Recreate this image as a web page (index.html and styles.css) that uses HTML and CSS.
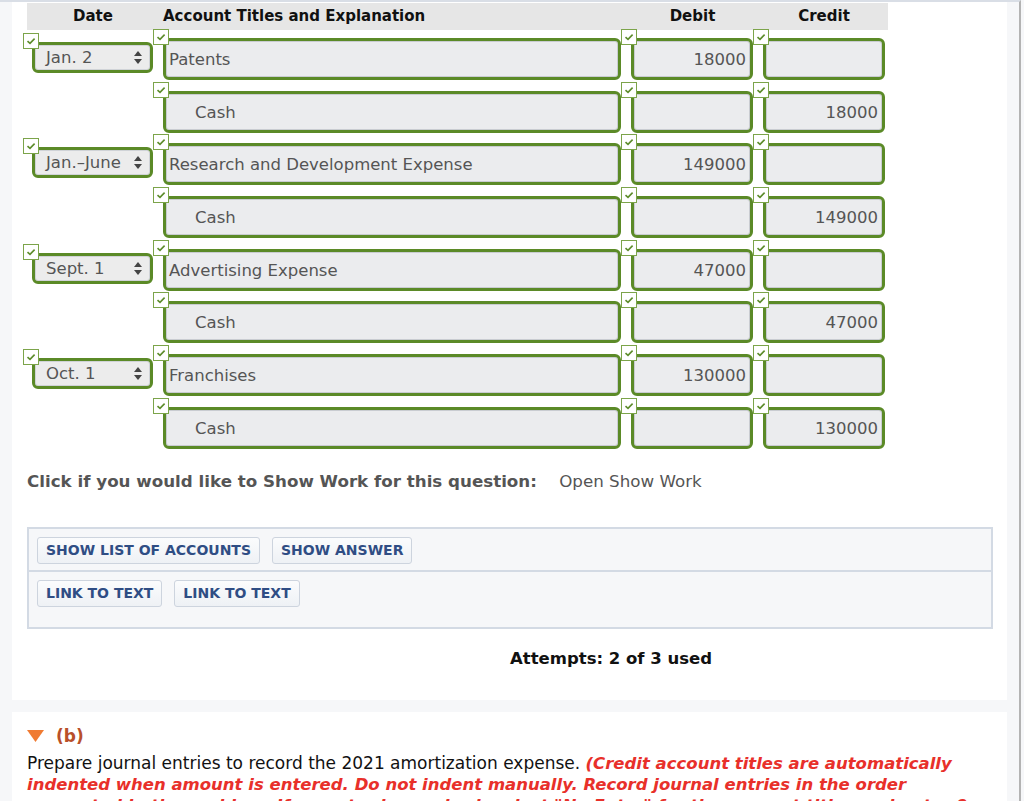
FILE: index.html
```html
<!DOCTYPE html>
<html lang="en">
<head>
    <meta charset="UTF-8">
    <title>Journal Entries</title>
    <link rel="stylesheet" href="styles.css">
</head>
<body>
    <div class="page">
        <div class="panel">
            <div class="journal-head">
                <div class="col-date">Date</div>
                <div class="col-account">Account Titles and Explanation</div>
                <div class="col-debit">Debit</div>
                <div class="col-credit">Credit</div>
            </div>

            <div class="journal" id="journal"></div>

            <p class="show-work">
                <b>Click if you would like to Show Work for this question:</b>
                <a href="#" class="show-work-link">Open Show Work</a>
            </p>

            <div class="tools">
                <div class="tools-row">
                    <button class="tool-btn">Show List of Accounts</button>
                    <button class="tool-btn">Show Answer</button>
                </div>
                <div class="tools-row tools-row-last">
                    <button class="tool-btn">Link to Text</button>
                    <button class="tool-btn">Link to Text</button>
                </div>
            </div>

            <div class="attempts">Attempts: 2 of 3 used</div>
        </div>

        <div class="panel panel-next">
            <div class="part-title">
                <svg class="caret" width="17" height="12" viewBox="0 0 17 12"><polygon points="0,0 17,0 8.5,12" fill="#f07b32"/></svg>
                <span>(b)</span>
            </div>
            <p class="part-text">
                Prepare journal entries to record the 2021 amortization expense.
                <em>(Credit account titles are automatically indented when amount is entered. Do not indent manually. Record journal entries in the order presented in the problem. If no entry is required, select "No Entry" for the account titles and enter 0 for the amounts.)</em>
            </p>
        </div>
    </div>

    <script>
        const entries = [
            { date: 'Jan. 2', account: 'Patents', debit: '18000', credit: '' },
            { date: '', account: 'Cash', debit: '', credit: '18000' },
            { date: 'Jan.\u2013June', account: 'Research and Development Expense', debit: '149000', credit: '' },
            { date: '', account: 'Cash', debit: '', credit: '149000' },
            { date: 'Sept. 1', account: 'Advertising Expense', debit: '47000', credit: '' },
            { date: '', account: 'Cash', debit: '', credit: '47000' },
            { date: 'Oct. 1', account: 'Franchises', debit: '130000', credit: '' },
            { date: '', account: 'Cash', debit: '', credit: '130000' }
        ];

        const tick = '<span class="check"><svg width="10" height="8" viewBox="0 0 10 8"><polyline points="1.5,4.2 4,6.4 8.6,1.6" fill="none" stroke="#5d8c2b" stroke-width="1.6"/></svg></span>';
        const spinner = '<svg class="spin" width="8" height="13" viewBox="0 0 8 13"><polygon points="4,0 8,5 0,5" fill="#444"/><polygon points="0,8 8,8 4,13" fill="#444"/></svg>';

        const journal = document.getElementById('journal');

        entries.forEach(function(entry) {
            const row = document.createElement('div');
            row.className = 'entry';

            let dateCell = '<div class="cell cell-date">';
            if (entry.date) {
                dateCell += tick + '<div class="date-select"><span>' + entry.date + '</span>' + spinner + '</div>';
            }
            dateCell += '</div>';

            // credit lines are shown indented
            const indent = entry.credit ? ' field-indent' : '';

            row.innerHTML = dateCell +
                '<div class="cell cell-account">' + tick + '<div class="field' + indent + '">' + entry.account + '</div></div>' +
                '<div class="cell cell-amount">' + tick + '<div class="field field-num">' + entry.debit + '</div></div>' +
                '<div class="cell cell-amount">' + tick + '<div class="field field-num">' + entry.credit + '</div></div>';

            journal.appendChild(row);
        });
    </script>
</body>
</html>
```

FILE: styles.css
```css
body {
    margin: 0;
    padding: 0;
    background: #f6f7f9;
    font-family: "DejaVu Sans", Verdana, sans-serif;
    color: #333;
    overflow: hidden;
}
.page {
    width: 1007px;
    border-top: 2px solid #d9dee6;
    border-right: 2px solid #b3b3b3;
    padding: 0 0 0 12px;
    box-sizing: content-box;
}
.panel {
    background: #fff;
    width: 965px;
    padding: 1px 15px 0 15px;
    height: 697px;
}
.panel-next {
    margin-top: 12px;
    height: 200px;
    padding-top: 12px;
}
.journal-head {
    display: grid;
    grid-template-columns: 131px 468px 132px 132px;
    width: 861px;
    height: 27px;
    background: #e6e6e6;
    font-weight: bold;
    font-size: 15px;
    color: #111;
    line-height: 27px;
    margin-bottom: -1px;
}
.journal-head .col-date {
    text-align: center;
    padding-left: 1px;
}
.journal-head .col-account {
    padding-left: 136px;
    margin-left: -131px;
    width: 460px;
}
.journal-head .col-debit {
    text-align: center;
    padding-left: 1px;
}
.journal-head .col-credit {
    text-align: center;
    padding-left: 0;
}
.journal {
    margin-left: -5px;
}
.entry {
    display: grid;
    grid-template-columns: 131px 468px 132px 132px;
    height: 52.7px;
}
.cell {
    position: relative;
    padding: 9px 0 0 10px;
}
.check {
    position: absolute;
    left: 0;
    top: 0;
    width: 14px;
    height: 14px;
    border: 1px solid #7ca44a;
    background: #fff;
    display: flex;
    align-items: center;
    justify-content: center;
    z-index: 2;
}
.cell-date .check {
    left: 1px;
    top: 4px;
}
.field {
    height: 36px;
    border: 3px solid #5b8a27;
    border-radius: 6px;
    background: #ebecee;
    box-shadow: inset 0 0 0 1px #c9ccd1;
    font-size: 16.5px;
    color: #555;
    line-height: 37px;
    padding: 0 4px 0 3px;
}
.field-indent {
    padding-left: 29px;
}
.field-num {
    text-align: right;
}
.date-select {
    height: 25px;
    margin-top: 4px;
    border: 3px solid #5b8a27;
    border-radius: 6px;
    background: #ececec;
    box-shadow: inset 0 0 0 1px #d0d3d7;
    font-size: 16.5px;
    color: #555;
    line-height: 25px;
    display: flex;
    justify-content: space-between;
    align-items: center;
    padding: 0 8px 0 11px;
}
.spin {
    display: block;
}
.show-work {
    margin: 20px 0 0 0;
    font-size: 16.7px;
    color: #555;
}
.show-work b {
    margin-right: 17px;
}
.show-work-link {
    color: #555;
    text-decoration: none;
}
.tools {
    margin-top: 36px;
    width: 962px;
    border: 2px solid #d3dae4;
    background: #f6f7f9;
}
.tools-row {
    display: flex;
    gap: 12px;
    padding: 8px 8px 6px 8px;
    border-bottom: 2px solid #d3dae4;
}
.tools-row-last {
    border-bottom: none;
    padding-top: 8px;
    height: 41px;
}
.tool-btn {
    height: 27px;
    border: 1px solid #cdd4de;
    border-radius: 3px;
    background: linear-gradient(#fbfcfd, #eef1f5);
    font-family: "DejaVu Sans", Verdana, sans-serif;
    font-weight: bold;
    font-size: 14px;
    color: #2f4d84;
    text-transform: uppercase;
    padding: 0 8px;
}
.attempts {
    margin-top: 20px;
    margin-left: 483px;
    font-weight: bold;
    font-size: 16.5px;
    color: #111;
}
.part-title {
    display: flex;
    align-items: center;
    gap: 12px;
    font-weight: bold;
    font-size: 17px;
    color: #b9502a;
    margin-top: 2px;
}
.part-text {
    margin: 7px 0 0 0;
    font-size: 17px;
    line-height: 21px;
    color: #111;
    width: 950px;
}
.part-text em {
    color: #e8302a;
    font-weight: bold;
    font-size: 16.5px;
}
```
